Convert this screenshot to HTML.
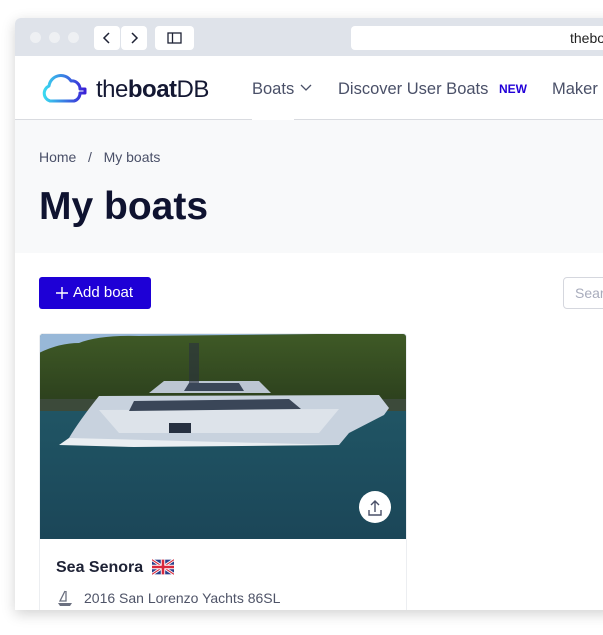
<!DOCTYPE html>
<html><head><meta charset="utf-8"><style>
*{box-sizing:border-box;margin:0;padding:0}
body{width:603px;height:635px;background:#fff;font-family:"Liberation Sans",sans-serif;position:relative;overflow:hidden}
.win{position:absolute;left:15px;top:18px;width:600px;height:592px;background:#fff;overflow:hidden;box-shadow:0 4px 14px rgba(0,0,0,.18);border-radius:6px 0 0 0}
.bar{height:38px;background:#dfe3ea;position:relative}
.dot{position:absolute;top:14px;width:11px;height:11px;border-radius:50%;background:#eef0f3}
.btn{position:absolute;top:8px;height:24px;background:#fff;border-radius:4px}
.nav{height:64px;border-bottom:1px solid #d9dbe0;position:relative}
.nav span{position:absolute;top:24px;font-size:16.5px;color:#4a5068}
.hero{background:#f8f9fa;height:133px;position:relative}
</style></head><body>
<div class="win">
 <div class="bar">
  <div class="dot" style="left:15px"></div><div class="dot" style="left:34px"></div><div class="dot" style="left:53px"></div>
  <div class="btn" style="left:79px;width:26px"><svg width="26" height="24"><path d="M15 7l-5 5 5 5" stroke="#1e2235" stroke-width="1.5" fill="none"/></svg></div>
  <div class="btn" style="left:106px;width:26px"><svg width="26" height="24"><path d="M11 7l5 5-5 5" stroke="#1e2235" stroke-width="1.5" fill="none"/></svg></div>
  <div class="btn" style="left:140px;width:39px"><svg width="39" height="24"><rect x="13" y="7" width="13" height="10" stroke="#1e2235" stroke-width="1.3" fill="none"/><line x1="17.5" y1="7" x2="17.5" y2="17" stroke="#1e2235" stroke-width="1.3"/></svg></div>
  <div class="btn" style="left:336px;width:300px"><span style="position:absolute;left:219px;top:4px;font-size:14px;color:#222">thebo</span></div>
 </div>
 <div class="nav">
  <svg style="position:absolute;left:25px;top:15px" width="48" height="34" viewBox="0 0 48 34"><defs><linearGradient id="g" x1="0" x2="1"><stop offset="0" stop-color="#3ad9f0"/><stop offset="1" stop-color="#3a1fd6"/></linearGradient></defs><path d="M10 30 A8 8 0 0 1 9 15 A12 12 0 0 1 31 10 A8 8 0 0 1 40 18 L45 18 L45 22 L40 22 A8 8 0 0 1 34 30 Z" fill="none" stroke="url(#g)" stroke-width="3" stroke-linejoin="round"/></svg>
  <div style="position:absolute;left:81px;top:20px;font-size:24px;color:#141833;letter-spacing:-.5px">the<b>boat</b>DB</div>
  <span style="left:237px">Boats</span>
  <svg style="position:absolute;left:285px;top:28px" width="12" height="8"><path d="M1 1l5 5 5-5" stroke="#4a5068" stroke-width="1.3" fill="none"/></svg>
  <span style="left:323px">Discover User Boats</span>
  <span style="left:484px;top:26px;font-size:12px;font-weight:bold;color:#2200d8">NEW</span>
  <span style="left:537px">Maker</span>
  <div style="position:absolute;left:237px;top:63px;width:42px;height:2px;background:#fff"></div>
 </div>
 <div class="hero">
  <div style="position:absolute;left:24px;top:29px;font-size:14px;color:#4a5068">Home &nbsp;&nbsp;/&nbsp;&nbsp; My boats</div>
  <div style="position:absolute;left:24px;top:65px;font-size:39px;font-weight:bold;color:#0f1330">My boats</div>
 </div>
 <div style="position:absolute;left:24px;top:259px;width:112px;height:32px;background:#1e00d6;border-radius:3px;color:#fff;font-size:15px;line-height:32px;padding-left:34px">Add boat
  <svg style="position:absolute;left:17px;top:10px" width="12" height="12"><path d="M6 0v12M0 6h12" stroke="#fff" stroke-width="1.4"/></svg></div>
 <div style="position:absolute;left:548px;top:259px;width:80px;height:32px;border:1px solid #d5d7de;border-radius:4px;color:#a8acbc;font-size:14px;line-height:30px;padding-left:11px">Search</div>
 <div style="position:absolute;left:24px;top:315px;width:368px;height:290px;border:1px solid #eceef1;border-radius:4px;overflow:hidden">
  <svg width="368" height="206" viewBox="0 0 368 206" style="display:block;margin:-1px 0 0 -1px">
   <defs><linearGradient id="h" x1="0" y1="0" x2="0" y2="1"><stop offset="0" stop-color="#3f5a26"/><stop offset="1" stop-color="#2a3d1c"/></linearGradient>
   <linearGradient id="w" x1="0" y1="0" x2="0" y2="1"><stop offset="0" stop-color="#235e6c"/><stop offset="1" stop-color="#1b4658"/></linearGradient></defs>
   <rect width="368" height="206" fill="url(#w)"/>
   <rect width="368" height="20" fill="#98b8d8"/>
   <path d="M0 20 Q20 10 40 10 Q60 2 100 3 L368 0 L368 78 L0 78 Z" fill="url(#h)"/>
   <rect y="66" width="368" height="12" fill="#3c4a3a"/>
   <path d="M60 63 L340 62 L350 75 L345 82 L310 100 L300 112 L95 113 L40 110 L30 105 Q40 88 60 63 Z" fill="#c8d2de"/>
   <path d="M60 77 L300 76 L280 100 L80 100 Z" fill="#dde3ea"/>
   <path d="M95 68 L250 66 L262 76 L90 78 Z" fill="#3a4658"/>
   <path d="M125 48 L220 48 L232 60 L110 60 Z" fill="#bcc6d2"/>
   <path d="M150 50 L200 50 L205 58 L145 58 Z" fill="#3a4658"/>
   <rect x="150" y="10" width="10" height="40" fill="#2a3040" opacity=".6"/>
   <rect x="130" y="90" width="22" height="10" fill="#263040"/>
   <path d="M30 105 L300 112 L95 114 L20 112 Z" fill="#eaeef2"/>
   <circle cx="336" cy="174" r="16" fill="#fff"/>
   <path d="M336 179v-10M332 172l4-4 4 4M330 177v5h12v-5" stroke="#4a5068" stroke-width="1.4" fill="none"/>
  </svg>
  <div style="position:absolute;left:16px;top:225px;font-size:16px;font-weight:bold;color:#1e2235">Sea Senora</div>
  <svg style="position:absolute;left:112px;top:225px" width="22" height="16" viewBox="0 0 60 40"><rect width="60" height="40" fill="#2a3f8a"/><path d="M0 0L60 40M60 0L0 40" stroke="#fff" stroke-width="8"/><path d="M0 0L60 40M60 0L0 40" stroke="#d8283c" stroke-width="3"/><path d="M30 0v40M0 20h60" stroke="#fff" stroke-width="12"/><path d="M30 0v40M0 20h60" stroke="#d8283c" stroke-width="7"/></svg>
  <svg style="position:absolute;left:17px;top:256px" width="16" height="16"><path d="M8 1L3 11h6V1" stroke="#6b7080" stroke-width="1.3" fill="none"/><path d="M1 13h14l-2 3H3z" fill="#6b7080"/></svg>
  <div style="position:absolute;left:44px;top:256px;font-size:14px;color:#4f5468">2016 San Lorenzo Yachts 86SL</div>
 </div>
</div>
</body></html>
